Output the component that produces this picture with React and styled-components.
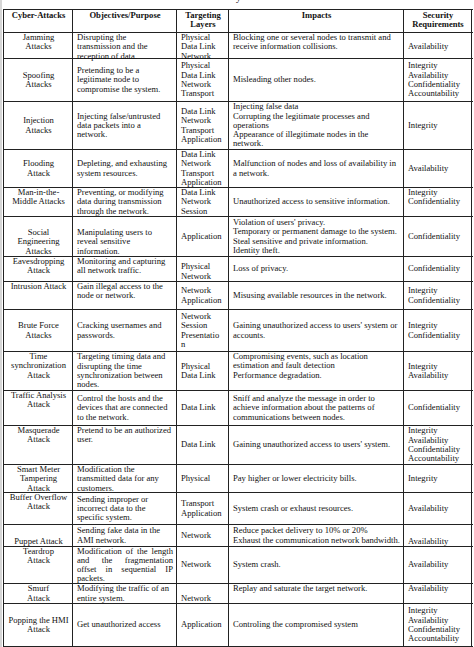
import React from 'react';
import styled, { createGlobalStyle } from 'styled-components';

const GlobalStyle = createGlobalStyle`
  html, body {
    margin: 0;
    padding: 0;
  }
  body {
    background: linear-gradient(to right, #d6d6d6 0, #d6d6d6 2px, #fff 2px);
    font-family: "Liberation Serif", "Times New Roman", serif;
    color: #111;
  }
`;

const Page = styled.div`
  width: 474px;
  height: 647px;
  overflow: hidden;
  padding-left: 3px;
  box-sizing: border-box;
`;

const Caption = styled.div`
  height: 9px;
  overflow: hidden;
  text-align: center;
  font-size: 10px;
  line-height: 10px;

  span {
    display: block;
    margin-top: -7px;
  }
`;

const Table = styled.div`
  width: 469px;
  border-top: 1px solid #222;
  border-left: 1px solid #222;
`;

const Row = styled.div`
  display: grid;
  grid-template-columns: 69px 104px 52px 175px 68px;
  height: ${(p) => p.$h}px;
  border-bottom: 1px solid #222;
  box-sizing: border-box;
`;

const justify = { top: 'flex-start', bottom: 'flex-end', center: 'center' };

const Cell = styled.div`
  display: flex;
  flex-direction: column;
  justify-content: ${(p) => justify[p.$v || 'center']};
  align-items: ${(p) => (p.$mid ? 'center' : 'flex-start')};
  text-align: ${(p) => (p.$mid ? 'center' : 'left')};
  padding: 0 3px 0 4px;
  border-right: 1px solid #222;
  font-size: 8.6px;
  line-height: ${(p) => p.$lh || 9.3}px;
  white-space: nowrap;
  min-width: 0;
`;

const HeadCell = styled(Cell)`
  justify-content: flex-start;
  align-items: center;
  text-align: center;
  padding-top: 1px;
  font-weight: bold;
`;

const Line = styled.span`
  display: block;
  ${(p) =>
    p.$justify &&
    `
    align-self: stretch;
    text-align: justify;
    text-align-last: justify;
  `}
`;

const head = [
  ['Cyber-Attacks'],
  ['Objectives/Purpose'],
  ['Targeting', 'Layers'],
  ['Impacts'],
  ['Security', 'Requirements'],
];

// each cell: lines, optional vertical alignment
const rows = [
  {
    h: 26,
    cells: [
      { l: ['Jamming', 'Attacks'], v: 'top' },
      { l: ['Disrupting the', 'transmission and the', 'reception of data.'] },
      { l: ['Physical', 'Data Link', 'Network'] },
      { l: ['Blocking one or several nodes to transmit and', 'receive information collisions.'], v: 'top' },
      { l: ['Availability'] },
    ],
  },
  {
    h: 43,
    cells: [
      { l: ['Spoofing', 'Attacks'] },
      { l: ['Pretending to be a', 'legitimate node to', 'compromise the system.'] },
      { l: ['Physical', 'Data Link', 'Network', 'Transport'] },
      { l: ['Misleading other nodes.'] },
      { l: ['Integrity', 'Availability', 'Confidentiality', 'Accountability'] },
    ],
  },
  {
    h: 48,
    cells: [
      { l: ['Injection', 'Attacks'] },
      { l: ['Injecting false/untrusted', 'data packets into a', 'network.'] },
      { l: ['Data Link', 'Network', 'Transport', 'Application'] },
      {
        l: [
          'Injecting false data',
          'Corrupting the legitimate processes and',
          'operations',
          'Appearance of illegitimate nodes in the',
          'network.',
        ],
      },
      { l: ['Integrity'] },
    ],
  },
  {
    h: 38,
    cells: [
      { l: ['Flooding', 'Attack'] },
      { l: ['Depleting, and exhausting', 'system resources.'] },
      { l: ['Data Link', 'Network', 'Transport', 'Application'] },
      { l: ['Malfunction of nodes and loss of availability in', 'a network.'] },
      { l: ['Availability'] },
    ],
  },
  {
    h: 29,
    cells: [
      { l: ['Man-in-the-', 'Middle Attacks'], v: 'top' },
      { l: ['Preventing, or modifying', 'data during transmission', 'through the network.'] },
      { l: ['Data Link', 'Network', 'Session'] },
      { l: ['Unauthorized access to sensitive information.'] },
      { l: ['Integrity', 'Confidentiality'], v: 'top' },
    ],
  },
  {
    h: 40,
    cells: [
      { l: ['Social', 'Engineering', 'Attacks'], v: 'bottom' },
      { l: ['Manipulating users to', 'reveal sensitive', 'information.'], v: 'bottom' },
      { l: ['Application'] },
      {
        l: [
          "Violation of users' privacy.",
          'Temporary or permanent damage to the system.',
          'Steal sensitive and private information.',
          'Identity theft.',
        ],
      },
      { l: ['Confidentiality'] },
    ],
  },
  {
    h: 25,
    cells: [
      { l: ['Eavesdropping', 'Attack'], v: 'top' },
      { l: ['Monitoring and capturing', 'all network traffic.'], v: 'top' },
      { l: ['Physical', 'Network'], v: 'bottom' },
      { l: ['Loss of privacy.'] },
      { l: ['Confidentiality'] },
    ],
  },
  {
    h: 28,
    cells: [
      { l: ['Intrusion Attack'], v: 'top' },
      { l: ['Gain illegal access to the', 'node or network.'], v: 'top' },
      { l: ['Network', 'Application'] },
      { l: ['Misusing available resources in the network.'] },
      { l: ['Integrity', 'Confidentiality'] },
    ],
  },
  {
    h: 42,
    cells: [
      { l: ['Brute Force', 'Attacks'] },
      { l: ['Cracking usernames and', 'passwords.'] },
      { l: ['Network', 'Session', 'Presentatio', 'n'] },
      { l: ["Gaining unauthorized access to users' system or", 'accounts.'] },
      { l: ['Integrity', 'Confidentiality'] },
    ],
  },
  {
    h: 39,
    cells: [
      { l: ['Time', 'synchronization', 'Attack'], v: 'top' },
      { l: ['Targeting timing data and', 'disrupting the time', 'synchronization between', 'nodes.'] },
      { l: ['Physical', 'Data Link'] },
      {
        l: ['Compromising events, such as location', 'estimation and fault detection', 'Performance degradation.'],
        v: 'top',
      },
      { l: ['Integrity', 'Availability'] },
    ],
  },
  {
    h: 35,
    cells: [
      { l: ['Traffic Analysis', 'Attack'], v: 'top' },
      { l: ['Control the hosts and the', 'devices that are connected', 'to the network.'] },
      { l: ['Data Link'] },
      {
        l: [
          'Sniff and analyze the message in order to',
          'achieve information about the patterns of',
          'communications between nodes.',
        ],
      },
      { l: ['Confidentiality'] },
    ],
  },
  {
    h: 39,
    cells: [
      { l: ['Masquerade', 'Attack'], v: 'top' },
      { l: ['Pretend to be an authorized', 'user.'], v: 'top' },
      { l: ['Data Link'] },
      { l: ["Gaining unauthorized access to users' system."] },
      { l: ['Integrity', 'Availability', 'Confidentiality', 'Accountability'] },
    ],
  },
  {
    h: 28,
    cells: [
      { l: ['Smart Meter', 'Tampering', 'Attack'] },
      { l: ['Modification the', 'transmitted data for any', 'customers.'] },
      { l: ['Physical'] },
      { l: ['Pay higher or lower electricity bills.'] },
      { l: ['Integrity'] },
    ],
  },
  {
    h: 32,
    cells: [
      { l: ['Buffer Overflow', 'Attack'], v: 'top' },
      { l: ['Sending improper or', 'incorrect data to the', 'specific system.'] },
      { l: ['Transport', 'Application'] },
      { l: ['System crash or exhaust resources.'] },
      { l: ['Availability'] },
    ],
  },
  {
    h: 22,
    cells: [
      { l: ['Puppet Attack'], v: 'bottom' },
      { l: ['Sending fake data in the', 'AMI network.'] },
      { l: ['Network'] },
      { l: ['Reduce packet delivery to 10% or 20%', 'Exhaust the communication network bandwidth.'] },
      { l: ['Availability'], v: 'bottom' },
    ],
  },
  {
    h: 37,
    cells: [
      { l: ['Teardrop', 'Attack'], v: 'top' },
      {
        l: ['Modification of the length', 'and the fragmentation', 'offset in sequential IP', 'packets.'],
        j: 3,
        lh: 9,
      },
      { l: ['Network'] },
      { l: ['System crash.'] },
      { l: ['Availability'] },
    ],
  },
  {
    h: 20,
    cells: [
      { l: ['Smurf', 'Attack'] },
      { l: ['Modifying the traffic of an', 'entire system.'] },
      { l: ['Network'], v: 'bottom' },
      { l: ['Replay and saturate the target network.'], v: 'top' },
      { l: ['Availability'], v: 'top' },
    ],
  },
  {
    h: 43,
    cells: [
      { l: ['Popping the HMI', 'Attack'] },
      { l: ['Get unauthorized access'] },
      { l: ['Application'] },
      { l: ['Controling the compromised system'] },
      { l: ['Integrity', 'Availability', 'Confidentiality', 'Accountability'] },
    ],
  },
];

export default function App() {
  return (
    <>
      <GlobalStyle />
      <Page>
        <Caption>
          <span>y</span>
        </Caption>
        <Table>
          <Row $h={23}>
            {head.map((lines, i) => (
              <HeadCell key={i}>
                {lines.map((t) => (
                  <Line key={t}>{t}</Line>
                ))}
              </HeadCell>
            ))}
          </Row>
          {rows.map((row, r) => (
            <Row key={r} $h={row.h}>
              {row.cells.map((c, i) => (
                <Cell key={i} $v={c.v} $mid={i === 0} $lh={c.lh}>
                  {c.l.map((t, k) => (
                    <Line key={k} $justify={c.j && k < c.j}>
                      {t}
                    </Line>
                  ))}
                </Cell>
              ))}
            </Row>
          ))}
        </Table>
      </Page>
    </>
  );
}
